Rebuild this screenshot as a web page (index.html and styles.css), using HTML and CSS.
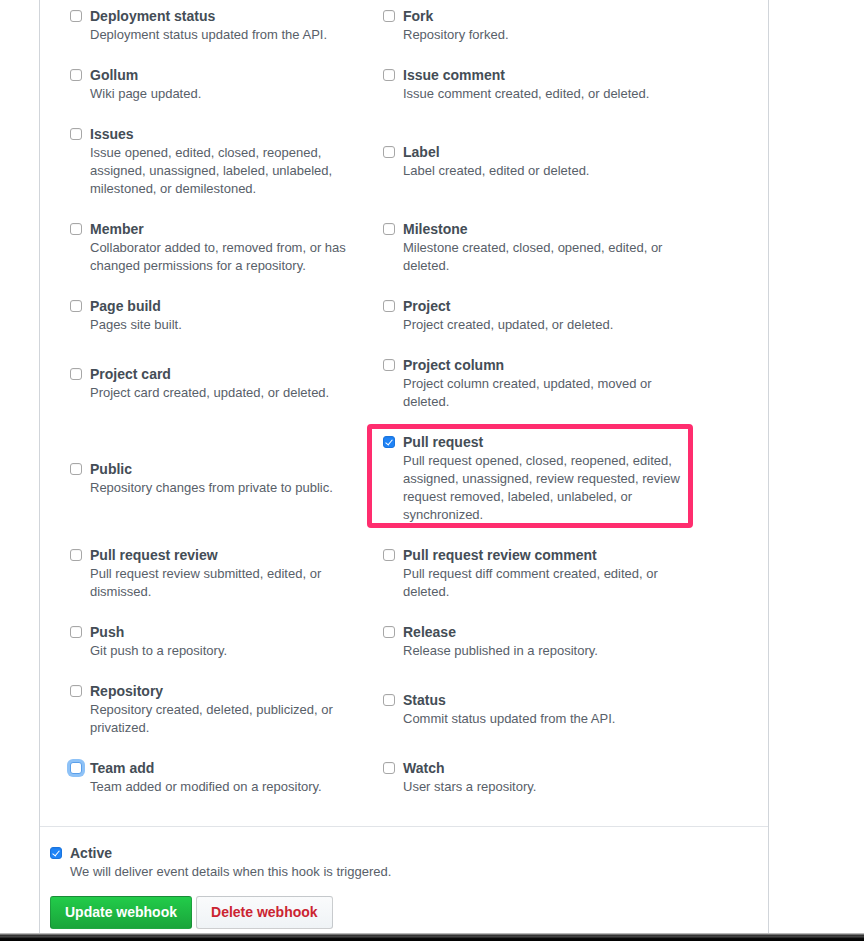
FILE: index.html
```html
<!DOCTYPE html>
<html lang="en">
<head>
<meta charset="utf-8">
<title>Webhook events</title>
<link rel="stylesheet" href="styles.css">
</head>
<body>
<div class="page">
  <div class="box">
    <div class="events">
      <label class="event"><input type="checkbox" class="cb"><span class="text"><span class="title">Deployment status</span><span class="desc">Deployment status updated from the API.</span></span></label>
      <label class="event"><input type="checkbox" class="cb"><span class="text"><span class="title">Fork</span><span class="desc">Repository forked.</span></span></label>

      <label class="event"><input type="checkbox" class="cb"><span class="text"><span class="title">Gollum</span><span class="desc">Wiki page updated.</span></span></label>
      <label class="event"><input type="checkbox" class="cb"><span class="text"><span class="title">Issue comment</span><span class="desc">Issue comment created, edited, or deleted.</span></span></label>

      <label class="event"><input type="checkbox" class="cb"><span class="text"><span class="title">Issues</span><span class="desc">Issue opened, edited, closed, reopened, assigned, unassigned, labeled, unlabeled, milestoned, or demilestoned.</span></span></label>
      <label class="event"><input type="checkbox" class="cb"><span class="text"><span class="title">Label</span><span class="desc">Label created, edited or deleted.</span></span></label>

      <label class="event"><input type="checkbox" class="cb"><span class="text"><span class="title">Member</span><span class="desc">Collaborator added to, removed from, or has changed permissions for a repository.</span></span></label>
      <label class="event"><input type="checkbox" class="cb"><span class="text"><span class="title">Milestone</span><span class="desc">Milestone created, closed, opened, edited, or deleted.</span></span></label>

      <label class="event"><input type="checkbox" class="cb"><span class="text"><span class="title">Page build</span><span class="desc">Pages site built.</span></span></label>
      <label class="event"><input type="checkbox" class="cb"><span class="text"><span class="title">Project</span><span class="desc">Project created, updated, or deleted.</span></span></label>

      <label class="event"><input type="checkbox" class="cb"><span class="text"><span class="title">Project card</span><span class="desc">Project card created, updated, or deleted.</span></span></label>
      <label class="event"><input type="checkbox" class="cb"><span class="text"><span class="title">Project column</span><span class="desc">Project column created, updated, moved or deleted.</span></span></label>

      <label class="event"><input type="checkbox" class="cb"><span class="text"><span class="title">Public</span><span class="desc">Repository changes from private to public.</span></span></label>
      <label class="event highlighted"><input type="checkbox" class="cb" checked><span class="text"><span class="title">Pull request</span><span class="desc">Pull request opened, closed, reopened, edited, assigned, unassigned, review requested, review request removed, labeled, unlabeled, or synchronized.</span></span><span class="highlight"></span></label>

      <label class="event"><input type="checkbox" class="cb"><span class="text"><span class="title">Pull request review</span><span class="desc">Pull request review submitted, edited, or dismissed.</span></span></label>
      <label class="event"><input type="checkbox" class="cb"><span class="text"><span class="title">Pull request review comment</span><span class="desc">Pull request diff comment created, edited, or deleted.</span></span></label>

      <label class="event"><input type="checkbox" class="cb"><span class="text"><span class="title">Push</span><span class="desc">Git push to a repository.</span></span></label>
      <label class="event"><input type="checkbox" class="cb"><span class="text"><span class="title">Release</span><span class="desc">Release published in a repository.</span></span></label>

      <label class="event"><input type="checkbox" class="cb"><span class="text"><span class="title">Repository</span><span class="desc">Repository created, deleted, publicized, or privatized.</span></span></label>
      <label class="event"><input type="checkbox" class="cb"><span class="text"><span class="title">Status</span><span class="desc">Commit status updated from the API.</span></span></label>

      <label class="event"><input type="checkbox" class="cb focus"><span class="text"><span class="title">Team add</span><span class="desc">Team added or modified on a repository.</span></span></label>
      <label class="event"><input type="checkbox" class="cb"><span class="text"><span class="title">Watch</span><span class="desc">User stars a repository.</span></span></label>
    </div>

    <div class="active-section">
      <label class="event"><input type="checkbox" class="cb" checked><span class="text wide"><span class="title">Active</span><span class="desc">We will deliver event details when this hook is triggered.</span></span></label>
      <div class="actions">
        <button class="btn btn-primary" type="button">Update webhook</button>
        <button class="btn btn-danger" type="button">Delete webhook</button>
      </div>
    </div>
  </div>
  <div class="bar"></div>
</div>
</body>
</html>
```

FILE: styles.css
```css
html, body {
  margin: 0;
  padding: 0;
  background: #fff;
}

body {
  font-family: "Liberation Sans", Arial, sans-serif;
  color: #444d56;
}

.page {
  width: 864px;
  height: 941px;
  overflow: hidden;
  display: flex;
  flex-direction: column;
}

.box {
  margin-left: 39px;
  width: 730px;
  height: 933px;
  box-sizing: border-box;
  border-left: 1px solid #d1d5da;
  border-right: 1px solid #d1d5da;
  flex: none;
}

.events {
  display: grid;
  grid-template-columns: 313px 313px;
  row-gap: 21px;
  align-items: center;
  padding: 6px 0 30px 30px;
  border-bottom: 1px solid #e1e4e8;
}

.event {
  display: flex;
  align-items: flex-start;
  gap: 8px;
  position: relative;
}

.text {
  display: flex;
  flex-direction: column;
  max-width: 283px;
}

.text.wide {
  max-width: none;
}

.title {
  font-size: 14px;
  font-weight: bold;
  line-height: 20px;
  color: #444d56;
}

.desc {
  font-size: 13px;
  line-height: 18px;
  color: #586069;
}

.cb {
  -webkit-appearance: none;
  appearance: none;
  flex: none;
  width: 12px;
  height: 12px;
  margin: 4px 0 0;
  box-sizing: border-box;
  border: 1px solid #a7a7a7;
  border-radius: 3px;
  background: #fff;
  box-shadow: inset 0 1px 0 rgba(0, 0, 0, 0.04);
  position: relative;
}

.cb:checked {
  background: #1f83f6;
  border-color: #1a74dd;
}

.cb:checked::after {
  content: "";
  position: absolute;
  left: 3px;
  top: 1px;
  width: 3px;
  height: 6px;
  border-right: 1.6px solid #fff;
  border-bottom: 1.6px solid #fff;
  transform: rotate(40deg);
}

.cb.focus {
  border-color: #5a9fea;
  box-shadow: 0 0 0 3px #8ec2f7;
}

.highlight {
  position: absolute;
  left: -16px;
  top: -8px;
  width: 326px;
  height: 104px;
  box-sizing: border-box;
  border: 5px solid #ff2d6e;
  border-radius: 4px;
  pointer-events: none;
}

.active-section {
  padding: 16px 0 0 10px;
}

.actions {
  display: flex;
  gap: 4px;
  margin-top: 15px;
}

.btn {
  font-family: "Liberation Sans", Arial, sans-serif;
  font-size: 14px;
  font-weight: bold;
  line-height: 19px;
  padding: 6px 14px;
  border: 1px solid rgba(27, 31, 35, 0.2);
  border-radius: 3px;
  cursor: pointer;
}

.btn-primary {
  color: #fff;
  background: linear-gradient(180deg, #22cc4a 0%, #1aa53b 100%);
}

.btn-danger {
  color: #cb2431;
  background: linear-gradient(180deg, #fafbfc 0%, #eff3f6 100%);
}

.bar {
  flex: none;
  height: 8px;
  background: linear-gradient(180deg, #b9b9b9 0px, #b9b9b9 1px, #2b2b2b 2px, #4a4a4a 4px, #0a0a0a 5px, #000 8px);
}
```
